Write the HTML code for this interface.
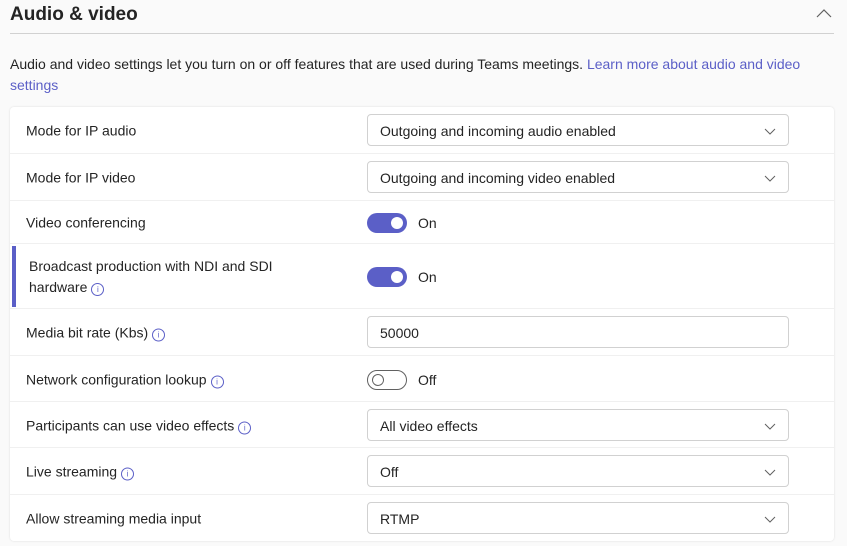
<!DOCTYPE html><html><head><style>
body{margin:0;width:847px;height:546px;background:#fafafa;font-family:"Liberation Sans",sans-serif;color:#242424;position:relative;overflow:hidden}
.t{position:absolute;left:10px;top:4px;font-size:19px;font-weight:bold;color:#242424}
.hl{position:absolute;left:10px;top:33px;width:824px;height:1px;background:#d1d1d1}
.chev{position:absolute;left:815px;top:7px}
.desc{position:absolute;left:10px;top:54px;width:820px;font-size:14px;line-height:21px}
.desc a{color:#5b5fc7;text-decoration:none}
.card{position:absolute;left:10px;top:107px;width:824px;height:434px;background:#fff;border-radius:4px;box-shadow:0 0 2px rgba(0,0,0,.12)}
.row{position:absolute;left:0;width:824px;border-bottom:1px solid #f0f0f0;font-size:14px}
.lab{position:absolute;left:16px;top:50%;transform:translateY(-50%);line-height:21px;margin-top:1px}
.dd{position:absolute;left:357px;top:50%;transform:translateY(-50%);width:420px;height:30px;border:1px solid #d1d1d1;border-radius:4px;box-sizing:content-box}
.dd span{position:absolute;left:12px;top:8px}
.dd svg{position:absolute;right:12px;top:13px}
.tg{position:absolute;left:357px;top:50%;transform:translateY(-50%);width:40px;height:20px;border-radius:10px;background:#5b5fc7;margin-top:1px}
.tg i{position:absolute;right:4px;top:4px;width:12px;height:12px;border-radius:6px;background:#fff}
.tg.off{background:#fff;border:1px solid #616161;box-sizing:border-box}
.tg.off i{left:4px;top:3px;border:1px solid #616161;background:#fff;width:10px;height:10px}
.tl{position:absolute;left:408px;top:50%;transform:translateY(-50%);margin-top:1px}
.info{display:inline-block;width:11px;height:11px;border:1px solid #5b5fc7;border-radius:50%;font-size:8px;line-height:11px;text-align:center;color:#5b5fc7;vertical-align:-1px;margin-left:4px;position:relative;top:-1px}
.bar{position:absolute;left:2px;top:2px;width:4px;height:61px;background:#5b5fc7}
</style></head><body>
<div class="t">Audio &amp; video</div>
<svg class="chev" width="18" height="12"><path d="M2 10 L9 3 L16 10" stroke="#616161" stroke-width="1.2" fill="none"/></svg>
<div class="hl"></div>
<div class="desc">Audio and video settings let you turn on or off features that are used during Teams meetings. <a>Learn more about audio and video settings</a></div>
<div class="card">
<div class="row" style="top:0;height:46px"><div class="lab">Mode for IP audio</div><div class="dd"><span>Outgoing and incoming audio enabled</span><svg width="12" height="8"><path d="M1 1 L6 6 L11 1" stroke="#616161" fill="none"/></svg></div></div>
<div class="row" style="top:47px;height:46px"><div class="lab">Mode for IP video</div><div class="dd"><span>Outgoing and incoming video enabled</span><svg width="12" height="8"><path d="M1 1 L6 6 L11 1" stroke="#616161" fill="none"/></svg></div></div>
<div class="row" style="top:94px;height:42px"><div class="lab">Video conferencing</div><div class="tg"><i></i></div><div class="tl">On</div></div>
<div class="row" style="top:137px;height:64px"><div class="bar"></div><div class="lab" style="left:19px">Broadcast production with NDI and SDI<br>hardware<span class="info">i</span></div><div class="tg"><i></i></div><div class="tl">On</div></div>
<div class="row" style="top:202px;height:46px"><div class="lab">Media bit rate (Kbs)<span class="info">i</span></div><div class="dd"><span>50000</span></div></div>
<div class="row" style="top:249px;height:45px"><div class="lab">Network configuration lookup<span class="info">i</span></div><div class="tg off"><i></i></div><div class="tl">Off</div></div>
<div class="row" style="top:295px;height:45px"><div class="lab">Participants can use video effects<span class="info">i</span></div><div class="dd"><span>All video effects</span><svg width="12" height="8"><path d="M1 1 L6 6 L11 1" stroke="#616161" fill="none"/></svg></div></div>
<div class="row" style="top:341px;height:46px"><div class="lab">Live streaming<span class="info">i</span></div><div class="dd"><span>Off</span><svg width="12" height="8"><path d="M1 1 L6 6 L11 1" stroke="#616161" fill="none"/></svg></div></div>
<div class="row" style="top:388px;height:46px;border:0"><div class="lab">Allow streaming media input</div><div class="dd"><span>RTMP</span><svg width="12" height="8"><path d="M1 1 L6 6 L11 1" stroke="#616161" fill="none"/></svg></div></div>
</div>
</body></html>
